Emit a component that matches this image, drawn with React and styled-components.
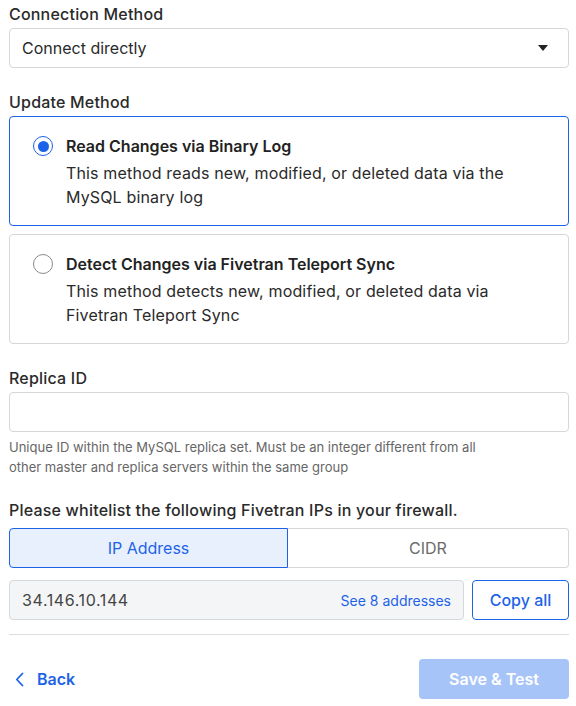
import React from "react";
import styled, { createGlobalStyle } from "styled-components";

const Global = createGlobalStyle`
  html, body { margin: 0; padding: 0; background: #fff; }
  body { font-family: Inter, "Liberation Sans", sans-serif; color: #222; -webkit-font-smoothing: antialiased; }
  * { box-sizing: border-box; }
`;

const BLUE = "#1d63e8";
const BORDER = "#d6d7db";

const Page = styled.div`
  width: 576px;
  padding: 4px 7px 0 9px;
  display: flex;
  flex-direction: column;
`;

const Field = styled.div`
  display: flex;
  flex-direction: column;
  gap: 4px;
  margin-bottom: ${(p) => p.$mb || 0}px;
`;

const Label = styled.div`
  font-size: 16px;
  line-height: 20px;
  font-weight: 500;
  letter-spacing: 0.2px;
  color: #2a2a2a;
`;

const Select = styled.div`
  height: 40px;
  border: 1px solid ${BORDER};
  border-radius: 4px;
  display: flex;
  align-items: center;
  justify-content: space-between;
  padding: 0 20px 0 12px;
  font-size: 16px;
  color: #2a2a2a;
`;

const Caret = styled.span`
  width: 0;
  height: 0;
  border-left: 5px solid transparent;
  border-right: 5px solid transparent;
  border-top: 6px solid #222;
`;

const Cards = styled.div`
  display: flex;
  flex-direction: column;
  gap: 8px;
`;

const Card = styled.div`
  height: 110px;
  border: 1px solid ${(p) => (p.$active ? BLUE : BORDER)};
  border-radius: 4px;
  padding: 17px 16px 16px 23px;
  display: flex;
  gap: 13px;
  align-items: flex-start;
`;

const Radio = styled.span`
  flex: none;
  width: 20px;
  height: 20px;
  margin-top: 2px;
  border-radius: 50%;
  border: 1px solid ${(p) => (p.$checked ? BLUE : "#8a8a8a")};
  display: flex;
  align-items: center;
  justify-content: center;
  &::after {
    content: "";
    width: 11px;
    height: 11px;
    border-radius: 50%;
    background: ${(p) => (p.$checked ? BLUE : "transparent")};
  }
`;

const CardBody = styled.div`
  display: flex;
  flex-direction: column;
  gap: 3px;
`;

const CardTitle = styled.div`
  font-size: 16px;
  line-height: 24px;
  font-weight: 600;
  color: #222;
`;

const CardDesc = styled.div`
  font-size: 16px;
  line-height: 24px;
  letter-spacing: 0.15px;
  color: #2a2a2a;
`;

const Input = styled.div`
  height: 40px;
  border: 1px solid ${BORDER};
  border-radius: 4px;
`;

const Help = styled.div`
  margin-top: 1px;
  font-size: 13px;
  line-height: 20px;
  color: #666;
`;

const Tabs = styled.div`
  display: grid;
  grid-template-columns: 279px 1fr;
  height: 40px;
  margin-top: 8px;
`;

const Tab = styled.div`
  display: flex;
  align-items: center;
  justify-content: center;
  font-size: 16px;
  border: 1px solid ${(p) => (p.$active ? BLUE : BORDER)};
  ${(p) => (p.$active ? "border-radius: 4px 0 0 4px;" : "border-left: none; border-radius: 0 4px 4px 0;")}
  background: ${(p) => (p.$active ? "#e8f0fd" : "#fff")};
  color: ${(p) => (p.$active ? BLUE : "#6b6b6b")};
`;

const IpRow = styled.div`
  display: flex;
  gap: 8px;
  height: 40px;
  margin-top: 12px;
`;

const IpBox = styled.div`
  flex: 1;
  background: #f4f5f7;
  border: 1px solid ${BORDER};
  border-radius: 4px;
  display: flex;
  align-items: center;
  justify-content: space-between;
  padding: 0 12px 0 12px;
`;

const IpText = styled.span`
  font-size: 16px;
  letter-spacing: 0.6px;
  color: #444;
`;

const SeeLink = styled.span`
  font-size: 14px;
  color: ${BLUE};
`;

const OutlineBtn = styled.div`
  width: 97px;
  border: 1px solid ${BLUE};
  border-radius: 4px;
  display: flex;
  align-items: center;
  justify-content: center;
  color: ${BLUE};
  font-size: 16px;
  font-weight: 500;
`;

const Divider = styled.div`
  height: 1px;
  background: #dcdde1;
  margin-top: 14px;
`;

const Footer = styled.div`
  display: flex;
  justify-content: space-between;
  align-items: center;
  margin-top: 24px;
`;

const BackLink = styled.div`
  display: flex;
  align-items: center;
  gap: 13px;
  padding-left: 6px;
  color: ${BLUE};
  font-size: 16px;
  font-weight: 600;
`;

const PrimaryBtn = styled.div`
  width: 150px;
  height: 40px;
  border-radius: 4px;
  background: #a7c4f9;
  color: #fff;
  font-size: 16px;
  font-weight: 600;
  display: flex;
  align-items: center;
  justify-content: center;
`;

export default function App() {
  return (
    <>
      <Global />
      <Page>
        <Field $mb={24}>
          <Label>Connection Method</Label>
          <Select>
            <span>Connect directly</span>
            <Caret />
          </Select>
        </Field>
        <Field $mb={24}>
          <Label>Update Method</Label>
          <Cards>
            <Card $active>
              <Radio $checked />
              <CardBody>
                <CardTitle>Read Changes via Binary Log</CardTitle>
                <CardDesc>
                  This method reads new, modified, or deleted data via the
                  <br />
                  MySQL binary log
                </CardDesc>
              </CardBody>
            </Card>
            <Card>
              <Radio />
              <CardBody>
                <CardTitle>Detect Changes via Fivetran Teleport Sync</CardTitle>
                <CardDesc>
                  This method detects new, modified, or deleted data via
                  <br />
                  Fivetran Teleport Sync
                </CardDesc>
              </CardBody>
            </Card>
          </Cards>
        </Field>
        <Field $mb={23}>
          <Label>Replica ID</Label>
          <Input />
          <Help>
            Unique ID within the MySQL replica set. Must be an integer different from all
            <br />
            other master and replica servers within the same group
          </Help>
        </Field>
        <Label>Please whitelist the following Fivetran IPs in your firewall.</Label>
        <Tabs>
          <Tab $active>IP Address</Tab>
          <Tab>CIDR</Tab>
        </Tabs>
        <IpRow>
          <IpBox>
            <IpText>34.146.10.144</IpText>
            <SeeLink>See 8 addresses</SeeLink>
          </IpBox>
          <OutlineBtn>Copy all</OutlineBtn>
        </IpRow>
        <Divider />
        <Footer>
          <BackLink>
            <svg width="9" height="15" viewBox="0 0 9 15" fill="none">
              <path d="M7.5 1.5L1.8 7.5l5.7 6" stroke={BLUE} strokeWidth="1.8" strokeLinecap="round" strokeLinejoin="round" />
            </svg>
            Back
          </BackLink>
          <PrimaryBtn>Save &amp; Test</PrimaryBtn>
        </Footer>
      </Page>
    </>
  );
}
